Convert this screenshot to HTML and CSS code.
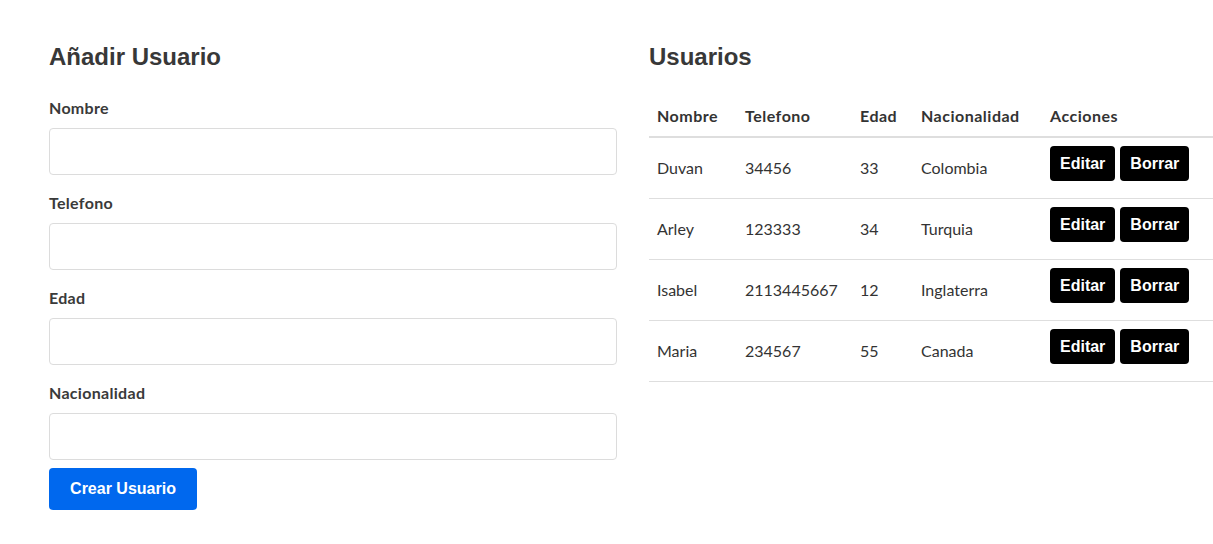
FILE: index.html
```html
<!DOCTYPE html>
<html lang="es">
<head>
<meta charset="utf-8">
<title>Usuarios</title>
<link rel="stylesheet" href="styles.css">
</head>
<body>
<div class="page">
  <section class="form-col">
    <h2 class="title">Añadir Usuario</h2>
    <form class="form">
      <div class="group">
        <label class="label">Nombre</label>
        <input class="input" type="text">
      </div>
      <div class="group">
        <label class="label">Telefono</label>
        <input class="input" type="text">
      </div>
      <div class="group">
        <label class="label">Edad</label>
        <input class="input" type="text">
      </div>
      <div class="group last">
        <label class="label">Nacionalidad</label>
        <input class="input" type="text">
      </div>
      <button class="btn-primary" type="button">Crear Usuario</button>
    </form>
  </section>
  <section class="table-col">
    <h2 class="title">Usuarios</h2>
    <table class="table">
      <colgroup>
        <col class="c1"><col class="c2"><col class="c3"><col class="c4"><col class="c5">
      </colgroup>
      <thead>
        <tr><th>Nombre</th><th>Telefono</th><th>Edad</th><th>Nacionalidad</th><th>Acciones</th></tr>
      </thead>
      <tbody>
        <tr><td>Duvan</td><td>34456</td><td>33</td><td>Colombia</td><td class="actions"><button class="btn-dark">Editar</button><button class="btn-dark">Borrar</button></td></tr>
        <tr><td>Arley</td><td>123333</td><td>34</td><td>Turquia</td><td class="actions"><button class="btn-dark">Editar</button><button class="btn-dark">Borrar</button></td></tr>
        <tr><td>Isabel</td><td>2113445667</td><td>12</td><td>Inglaterra</td><td class="actions"><button class="btn-dark">Editar</button><button class="btn-dark">Borrar</button></td></tr>
        <tr><td>Maria</td><td>234567</td><td>55</td><td>Canada</td><td class="actions"><button class="btn-dark">Editar</button><button class="btn-dark">Borrar</button></td></tr>
      </tbody>
    </table>
  </section>
</div>
</body>
</html>
```
FILE: styles.css
```css
* { box-sizing: border-box; }
html, body { margin: 0; padding: 0; background: #fff; }
body {
  font-family: Lato, "Open Sans", sans-serif;
  color: #333;
  overflow: hidden;
}
.page {
  display: grid;
  grid-template-columns: 568px 564px;
  column-gap: 32px;
  padding: 43px 0 0 49px;
}
.title {
  font-family: "Liberation Sans", Arial, sans-serif;
  font-size: 24px;
  line-height: 28px;
  font-weight: 700;
  color: #383838;
  margin: 0;
}
.form { margin-top: 27px; display: flex; flex-direction: column; }
.group { display: flex; flex-direction: column; margin-bottom: 18px; }
.group.last { margin-bottom: 8px; }
.label {
  font-size: 16px;
  font-weight: 700;
  letter-spacing: 0.3px;
  line-height: 20px;
  color: #3a3a3a;
  margin-bottom: 10px;
}
.input {
  height: 47px;
  width: 100%;
  border: 1px solid #dcdcdc;
  border-radius: 4px;
  background: #fff;
}
.btn-primary {
  align-self: flex-start;
  width: 148px;
  height: 42px;
  border: none;
  border-radius: 4px;
  background: #0068ee;
  color: #fff;
  font-family: "Liberation Sans", Arial, sans-serif;
  font-size: 16px;
  font-weight: 700;
}
.table {
  width: 564px;
  margin-top: 35px;
  border-collapse: collapse;
  table-layout: fixed;
}
.c1 { width: 88px; } .c2 { width: 115px; } .c3 { width: 61px; } .c4 { width: 129px; } .c5 { width: 171px; }
.table th {
  text-align: left;
  font-size: 16px;
  font-weight: 700;
  letter-spacing: 0.5px;
  color: #333;
  padding: 0 8px 10px;
  line-height: 20px;
  border-bottom: 2px solid #dedede;
}
.table td {
  font-size: 16px;
  color: #333;
  padding: 0 8px;
  height: 61px;
  border-bottom: 1px solid #dedede;
  vertical-align: middle;
}
.actions { white-space: nowrap; }
.btn-dark {
  height: 35px;
  padding: 0 10px;
  border: none;
  border-radius: 4px;
  background: #000;
  color: #fff;
  font-family: "Liberation Sans", Arial, sans-serif;
  font-size: 16px;
  font-weight: 700;
  margin-right: 5px;
  vertical-align: middle;
  position: relative;
  top: -4px;
}
```
